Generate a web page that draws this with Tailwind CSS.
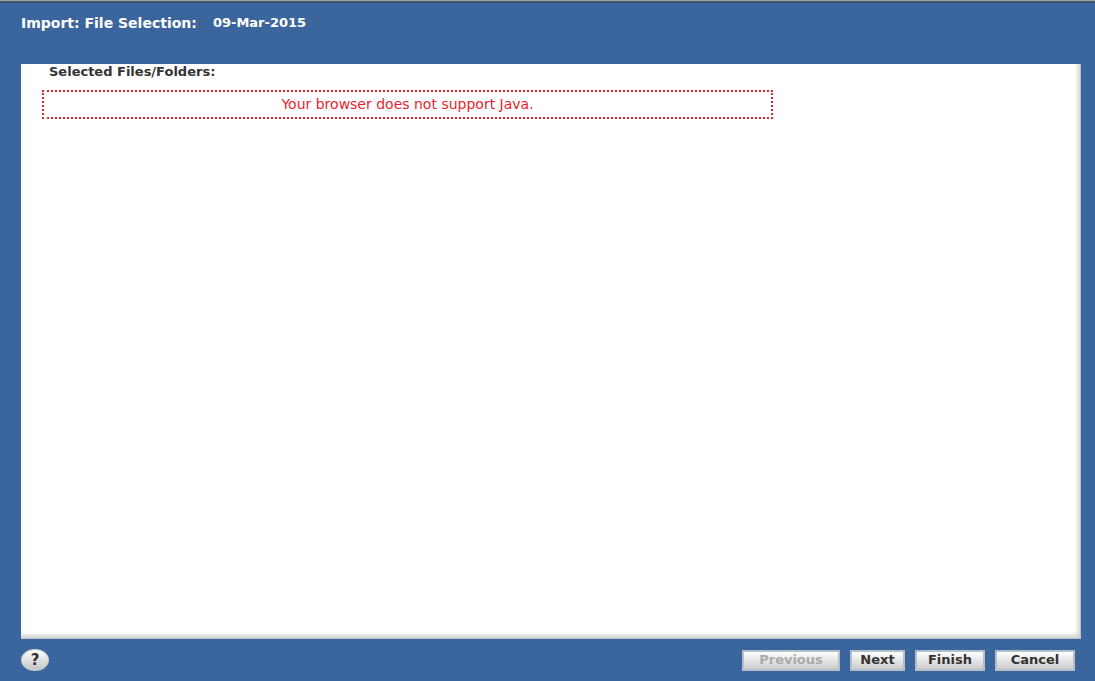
<!DOCTYPE html>
<html lang="en">
<head>
<meta charset="utf-8">
<title>Import: File Selection</title>
<script src="https://cdn.jsdelivr.net/npm/@tailwindcss/browser@4"></script>
</head>
<body class="flex min-h-screen flex-col border-t border-[#9aa0a2] bg-[#3b669d] font-['DejaVu_Sans',sans-serif] text-[#333]">
  <header class="flex h-[63px] items-start gap-4 border-t-2 border-[#40566b] px-[21px] pt-2.5 text-white">
    <h1 class="text-[14px] leading-5 font-bold">Import: File Selection:</h1>
    <span class="text-[13px] leading-5 font-bold">09-Mar-2015</span>
  </header>
  <main class="mr-3.5 ml-[21px] flex-1 border-r border-b border-[#b9c2cb] bg-white px-[21px] shadow-[inset_-4px_-5px_4px_-2px_#d0d0cc]">
    <h2 class="pl-[7px] text-[13px] leading-4 font-bold">Selected Files/Folders:</h2>
    <p class="mt-2.5 max-w-[731px] border-2 border-dotted border-[#e02430] py-1 text-center text-[14px] leading-[17px] text-[#e81e2c]">Your browser does not support Java.</p>
  </main>
  <footer class="flex h-[42px] items-center justify-between pr-5 pl-[21px]">
    <button type="button" aria-label="Help" class="flex h-[22px] w-7 items-center justify-center rounded-[50%] border border-[#c9ced3] bg-linear-to-b from-white to-[#c4c4c4] text-[15px] leading-4 font-bold">?</button>
    <div class="flex gap-2.5 text-[13px] leading-4 font-bold">
      <button type="button" disabled class="h-[21px] w-[98px] border-2 border-[#b4bfca] bg-linear-to-b from-white to-[#cbcbcb] text-[#aaa]">Previous</button>
      <button type="button" class="h-[21px] w-[55px] border-2 border-[#b4bfca] bg-linear-to-b from-white to-[#cbcbcb]">Next</button>
      <button type="button" class="h-[21px] w-[70px] border-2 border-[#b4bfca] bg-linear-to-b from-white to-[#cbcbcb]">Finish</button>
      <button type="button" class="h-[21px] w-[80px] border-2 border-[#b4bfca] bg-linear-to-b from-white to-[#cbcbcb]">Cancel</button>
    </div>
  </footer>
</body>
</html>
